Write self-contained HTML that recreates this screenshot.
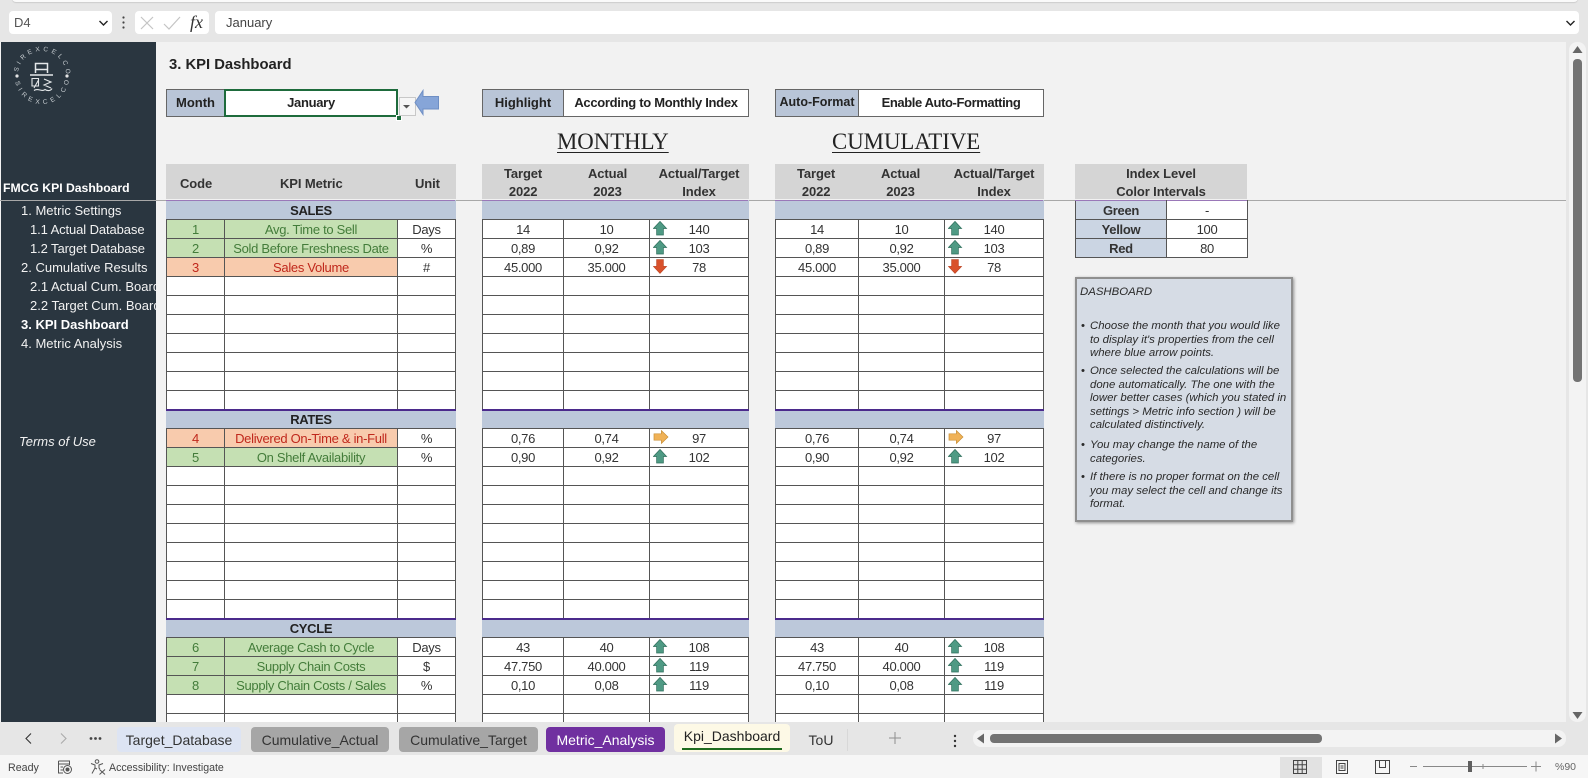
<!DOCTYPE html>
<html><head><meta charset="utf-8"><title>KPI Dashboard</title>
<style>
html,body{margin:0;padding:0;width:1588px;height:778px;overflow:hidden;background:#e6e6e6;font-family:"Liberation Sans",sans-serif;color:#333}
.a{position:absolute;white-space:nowrap}
.w{background:#fff;border-radius:4px;position:absolute;top:11px;height:23px}
#sheet{position:absolute;left:0;top:0;width:1588px;height:778px;clip-path:inset(42px 22px 56px 0)}
.bg{position:absolute;left:0;top:42px;width:1566px;height:680px;background:#f2f2f2}
#side{position:absolute;left:1px;top:42px;width:155px;height:680px;background:#2a3640;overflow:hidden;color:#f2f2f2;font-size:13px}
#side div{position:absolute;white-space:nowrap;line-height:16px}
.t{position:absolute;top:200px;border-collapse:collapse;table-layout:fixed;font-size:13px;color:#333;letter-spacing:-.3px}
.t td{height:19px;box-sizing:border-box;padding:1px 0 0;border:1px solid #555;text-align:center;background:#fff;white-space:nowrap;overflow:hidden;line-height:16px;position:relative}
.t td.s{background:#bcc8da;font-weight:bold;color:#222;border-color:#555 #bcc8da #555 #bcc8da;border-top:2px solid #4b2a8c}
.t tr:first-child td.s{border-top:1px solid #9a78b8}
.t td.g{background:#c5e0b3;color:#437c3a}
.t td.r{background:#f8cbad;color:#c0281c}
.t td svg{position:absolute;left:3px;top:1px}
.h{position:absolute;top:164px;height:35px;background:#d5d5d5;font-size:13px;font-weight:bold;color:#333;text-align:center;line-height:18px;letter-spacing:-.1px}
.h span{position:absolute;top:1px;white-space:nowrap}
.l{position:absolute;background:#b9c5d7;border:1px solid #666;box-sizing:border-box;font-size:13px;font-weight:bold;color:#222;text-align:center;line-height:25px;height:28px;top:89px}
.v{position:absolute;background:#fff;border:1px solid #666;box-sizing:border-box;font-size:13px;font-weight:bold;color:#222;text-align:center;line-height:25px;height:28px;top:89px;letter-spacing:-.3px}
.big{position:absolute;top:128px;font:22.8px/28px "Liberation Serif",serif;color:#222;text-decoration:underline;text-decoration-thickness:1px;text-underline-offset:3px;white-space:nowrap}
#note{position:absolute;left:1075px;top:277px;width:218px;height:245px;box-sizing:border-box;background:#d6dce5;border:2px solid #8f8f8f;box-shadow:1px 1px 3px rgba(0,0,0,.4);font-size:11.4px;font-style:italic;color:#2a2a2a;line-height:13.6px}
#note div{position:absolute;white-space:nowrap}
.tab{position:absolute;top:727px;height:25px;line-height:27px;text-align:center;font-size:14px;border-radius:4px;color:#333;white-space:nowrap}
</style></head><body>
<svg width="0" height="0" style="position:absolute"><defs>
<g id="up"><path d="M7 .4 13.6 7.5H10.4V14H3.6V7.5H.4Z" fill="#4f9a84" stroke="#2f6f5c" stroke-width=".7"/></g>
<g id="dn"><path d="M7 14.4 13.6 7.4H10.4V.6H3.6V7.4H.4Z" fill="#d9512b" stroke="#b83f1e" stroke-width=".6"/></g>
<g id="rt"><path d="M15 7 8.4 .6V3.8H1V10.2H8.4V13.4Z" fill="#f0b257" stroke="#c98f35" stroke-width=".7"/></g>
</defs></svg>

<!-- top bar -->
<div class="a" style="left:12px;top:-6px;width:1566px;height:8px;background:#fafafa;border-radius:4px;box-shadow:0 1px 1px #ccc"></div>
<div class="w" style="left:9px;width:103px"></div>
<div class="a" style="left:14px;top:15px;font-size:13px;color:#555;line-height:15px">D4</div>
<svg class="a" style="left:98px;top:19px" width="11" height="8"><path d="M1.5 2 5.5 6 9.5 2" fill="none" stroke="#222" stroke-width="1.4"/></svg>
<svg class="a" style="left:121px;top:15px" width="5" height="15"><circle cx="2.5" cy="2.5" r="1.1" fill="#444"/><circle cx="2.5" cy="7.5" r="1.1" fill="#444"/><circle cx="2.5" cy="12.5" r="1.1" fill="#444"/></svg>
<div class="w" style="left:135px;width:74px"></div>
<svg class="a" style="left:140px;top:16px" width="42" height="14"><path d="M1 1 13 13M13 1 1 13" stroke="#c4c4c4" stroke-width="1.2" fill="none"/><path d="M24 8 29 13 40 1" stroke="#c4c4c4" stroke-width="1.2" fill="none"/></svg>
<div class="a" style="left:190px;top:12px;font:italic 18px/20px 'Liberation Serif',serif;color:#333">fx</div>
<div class="w" style="left:215px;width:1364px"></div>
<div class="a" style="left:226px;top:15px;font-size:13px;color:#444;line-height:15px">January</div>
<svg class="a" style="left:1565px;top:19px" width="11" height="8"><path d="M1.5 2 5.5 6 9.5 2" fill="none" stroke="#222" stroke-width="1.4"/></svg>

<div id="sheet">
<div class="bg"></div>
<div id="side">
<svg class="a" style="left:0;top:0" width="85" height="70" font-family="Liberation Sans,sans-serif">
<defs><path id="c1" d="M17 33a24 24 0 0 1 48 0"/><path id="c2" d="M14 35a27 27 0 0 0 54 0"/></defs>
<text font-size="6.5" fill="#c8ced2" letter-spacing="3.2"><textPath href="#c1" startOffset="3">SIREXCELCO</textPath></text>
<text font-size="6.5" fill="#c8ced2" letter-spacing="3.8"><textPath href="#c2" startOffset="5">SIREXCELCO</textPath></text>
<circle cx="16" cy="34" r="1.6" fill="#e4e4e4"/><circle cx="66" cy="34" r="1.6" fill="#e4e4e4"/>
<path d="M34.5 31V21.5H46.5V31M34.5 27.5H46.5M29 33H52" fill="none" stroke="#e4e7e9" stroke-width="1.5"/>
<path d="M31 36.5H37.5V44H31ZM33 46 37.5 38M43 37 50 40 43 43 50 46M33 48.5C37 45.5 41 50.5 44 47.5 47 49.5 50 48.5 51 46.5" fill="none" stroke="#e4e7e9" stroke-width="1.1"/>
</svg>
<div style="left:2px;top:138px;font-weight:bold;font-size:12.2px;color:#fff">FMCG KPI Dashboard</div>
<div style="left:20px;top:161px">1. Metric Settings</div>
<div style="left:29px;top:180px;letter-spacing:-.1px">1.1 Actual Database</div>
<div style="left:29px;top:199px;letter-spacing:-.1px">1.2 Target Database</div>
<div style="left:20px;top:218px">2. Cumulative Results</div>
<div style="left:29px;top:237px">2.1 Actual Cum. Board</div>
<div style="left:29px;top:256px">2.2 Target Cum. Board</div>
<div style="left:20px;top:275px;font-weight:bold;color:#fff">3. KPI Dashboard</div>
<div style="left:20px;top:294px">4. Metric Analysis</div>
<div style="left:18px;top:392px;font-style:italic">Terms of Use</div>
</div>
<div class="a" style="left:0;top:200px;width:1566px;height:1px;background:#a8a8a8"></div>

<div class="a" style="left:169px;top:56px;font-size:14.8px;font-weight:bold;color:#222;line-height:19px">3. KPI Dashboard</div>

<div class="l" style="left:166px;width:59px">Month</div>
<div class="v" style="left:224px;width:174px;border:2px solid #1e6b3c;line-height:24px">January</div>
<div class="a" style="left:396px;top:115px;width:4px;height:4px;background:#1e6b3c;border:1px solid #fff"></div>
<div class="a" style="left:399px;top:97px;width:15px;height:17px;background:#f6f6f6;border:1px solid #c8c8c8"></div>
<svg class="a" style="left:403px;top:105px" width="8" height="4"><path d="M0 0H7L3.5 3.5Z" fill="#555"/></svg>
<svg class="a" style="left:414px;top:89px" width="26" height="27"><path d="M1 13.5 9 1.5V7.5H24.5V20H9V25.5Z" fill="#86a5d8" stroke="#6f8fc4"/></svg>

<div class="l" style="left:482px;width:82px">Highlight</div>
<div class="v" style="left:563px;width:186px">According to Monthly Index</div>
<div class="l" style="left:775px;width:84px;font-size:12.5px">Auto-Format</div>
<div class="v" style="left:858px;width:186px;letter-spacing:-.4px">Enable Auto-Formatting</div>

<div class="big" style="left:557px">MONTHLY</div>
<div class="big" style="left:832px">CUMULATIVE</div>

<div class="h" style="left:166px;width:290px"><span style="left:14px;top:11px">Code</span><span style="left:114px;top:11px">KPI Metric</span><span style="left:249px;top:11px">Unit</span></div>
<div class="h" style="left:482px;width:267px"><span style="left:22px">Target<br>2022</span><span style="left:106px">Actual<br>2023</span><span style="left:175px;width:84px">Actual/Target<br>Index</span></div>
<div class="h" style="left:775px;width:269px"><span style="left:22px">Target<br>2022</span><span style="left:106px">Actual<br>2023</span><span style="left:177px;width:84px">Actual/Target<br>Index</span></div>
<div class="h" style="left:1075px;width:172px"><span style="left:0;width:172px">Index Level<br>Color Intervals</span></div>

<table class="t" style="left:166px"><col style="width:58px"><col style="width:173px"><col style="width:58px">
<tr><td class="s" colspan="3">SALES</td></tr>
<tr><td class="g">1</td><td class="g">Avg. Time to Sell</td><td>Days</td></tr>
<tr><td class="g">2</td><td class="g">Sold Before Freshness Date</td><td>%</td></tr>
<tr><td class="r">3</td><td class="r">Sales Volume</td><td>#</td></tr>
<tr><td></td><td></td><td></td></tr><tr><td></td><td></td><td></td></tr><tr><td></td><td></td><td></td></tr><tr><td></td><td></td><td></td></tr><tr><td></td><td></td><td></td></tr><tr><td></td><td></td><td></td></tr><tr><td></td><td></td><td></td></tr>
<tr><td class="s" colspan="3">RATES</td></tr>
<tr><td class="r">4</td><td class="r">Delivered On-Time &amp; in-Full</td><td>%</td></tr>
<tr><td class="g">5</td><td class="g">On Shelf Availability</td><td>%</td></tr>
<tr><td></td><td></td><td></td></tr><tr><td></td><td></td><td></td></tr><tr><td></td><td></td><td></td></tr><tr><td></td><td></td><td></td></tr><tr><td></td><td></td><td></td></tr><tr><td></td><td></td><td></td></tr><tr><td></td><td></td><td></td></tr><tr><td></td><td></td><td></td></tr>
<tr><td class="s" colspan="3">CYCLE</td></tr>
<tr><td class="g">6</td><td class="g">Average Cash to Cycle</td><td>Days</td></tr>
<tr><td class="g">7</td><td class="g">Supply Chain Costs</td><td>$</td></tr>
<tr><td class="g">8</td><td class="g">Supply Chain Costs / Sales</td><td>%</td></tr>
<tr><td></td><td></td><td></td></tr><tr><td></td><td></td><td></td></tr>
</table>

<table class="t" style="left:482px"><col style="width:81px"><col style="width:86px"><col style="width:99px">
<tr><td class="s" colspan="3"></td></tr>
<tr><td>14</td><td>10</td><td><svg width="15" height="15"><use href="#up"/></svg>140</td></tr>
<tr><td>0,89</td><td>0,92</td><td><svg width="15" height="15"><use href="#up"/></svg>103</td></tr>
<tr><td>45.000</td><td>35.000</td><td><svg width="15" height="15"><use href="#dn"/></svg>78</td></tr>
<tr><td></td><td></td><td></td></tr><tr><td></td><td></td><td></td></tr><tr><td></td><td></td><td></td></tr><tr><td></td><td></td><td></td></tr><tr><td></td><td></td><td></td></tr><tr><td></td><td></td><td></td></tr><tr><td></td><td></td><td></td></tr>
<tr><td class="s" colspan="3"></td></tr>
<tr><td>0,76</td><td>0,74</td><td><svg width="16" height="15"><use href="#rt"/></svg>97</td></tr>
<tr><td>0,90</td><td>0,92</td><td><svg width="15" height="15"><use href="#up"/></svg>102</td></tr>
<tr><td></td><td></td><td></td></tr><tr><td></td><td></td><td></td></tr><tr><td></td><td></td><td></td></tr><tr><td></td><td></td><td></td></tr><tr><td></td><td></td><td></td></tr><tr><td></td><td></td><td></td></tr><tr><td></td><td></td><td></td></tr><tr><td></td><td></td><td></td></tr>
<tr><td class="s" colspan="3"></td></tr>
<tr><td>43</td><td>40</td><td><svg width="15" height="15"><use href="#up"/></svg>108</td></tr>
<tr><td>47.750</td><td>40.000</td><td><svg width="15" height="15"><use href="#up"/></svg>119</td></tr>
<tr><td>0,10</td><td>0,08</td><td><svg width="15" height="15"><use href="#up"/></svg>119</td></tr>
<tr><td></td><td></td><td></td></tr><tr><td></td><td></td><td></td></tr>
</table>

<table class="t" style="left:775px"><col style="width:83px"><col style="width:86px"><col style="width:99px">
<tr><td class="s" colspan="3"></td></tr>
<tr><td>14</td><td>10</td><td><svg width="15" height="15"><use href="#up"/></svg>140</td></tr>
<tr><td>0,89</td><td>0,92</td><td><svg width="15" height="15"><use href="#up"/></svg>103</td></tr>
<tr><td>45.000</td><td>35.000</td><td><svg width="15" height="15"><use href="#dn"/></svg>78</td></tr>
<tr><td></td><td></td><td></td></tr><tr><td></td><td></td><td></td></tr><tr><td></td><td></td><td></td></tr><tr><td></td><td></td><td></td></tr><tr><td></td><td></td><td></td></tr><tr><td></td><td></td><td></td></tr><tr><td></td><td></td><td></td></tr>
<tr><td class="s" colspan="3"></td></tr>
<tr><td>0,76</td><td>0,74</td><td><svg width="16" height="15"><use href="#rt"/></svg>97</td></tr>
<tr><td>0,90</td><td>0,92</td><td><svg width="15" height="15"><use href="#up"/></svg>102</td></tr>
<tr><td></td><td></td><td></td></tr><tr><td></td><td></td><td></td></tr><tr><td></td><td></td><td></td></tr><tr><td></td><td></td><td></td></tr><tr><td></td><td></td><td></td></tr><tr><td></td><td></td><td></td></tr><tr><td></td><td></td><td></td></tr><tr><td></td><td></td><td></td></tr>
<tr><td class="s" colspan="3"></td></tr>
<tr><td>43</td><td>40</td><td><svg width="15" height="15"><use href="#up"/></svg>108</td></tr>
<tr><td>47.750</td><td>40.000</td><td><svg width="15" height="15"><use href="#up"/></svg>119</td></tr>
<tr><td>0,10</td><td>0,08</td><td><svg width="15" height="15"><use href="#up"/></svg>119</td></tr>
<tr><td></td><td></td><td></td></tr><tr><td></td><td></td><td></td></tr>
</table>

<table class="t" style="left:1075px"><col style="width:91px"><col style="width:81px">
<tr><td style="background:#cbd5e3;font-weight:bold;border-top-color:#9a78b8">Green</td><td style="border-top-color:#9a78b8">-</td></tr>
<tr><td style="background:#cbd5e3;font-weight:bold">Yellow</td><td>100</td></tr>
<tr><td style="background:#cbd5e3;font-weight:bold">Red</td><td>80</td></tr>
</table>

<div id="note">
<div style="left:3px;top:7px">DASHBOARD</div>
<div style="left:4px;top:41px;font-style:normal">•</div>
<div style="left:13px;top:41px">Choose the month that you would like<br>to display it's properties from the cell<br>where blue arrow points.</div>
<div style="left:4px;top:86px;font-style:normal">•</div>
<div style="left:13px;top:86px">Once selected the calculations will be<br>done automatically. The one with the<br>lower better cases (which you stated in<br>settings &gt; Metric info section ) will be<br>calculated distinctively.</div>
<div style="left:4px;top:160px;font-style:normal">•</div>
<div style="left:13px;top:160px">You may change the name of the<br>categories.</div>
<div style="left:4px;top:192px;font-style:normal">•</div>
<div style="left:13px;top:192px">If there is no proper format on the cell<br>you may select the cell and change its<br>format.</div>
</div>
</div>

<!-- vertical scrollbar -->
<div class="a" style="left:1569px;top:42px;width:17px;height:680px;background:#f3f3f3;border-radius:8px"></div>
<div class="a" style="left:1573px;top:59px;width:9px;height:323px;background:#737373;border-radius:4px"></div>
<svg class="a" style="left:1572px;top:46px" width="11" height="8"><path d="M5.5 0 10.5 7H.5Z" fill="#666"/></svg>
<svg class="a" style="left:1572px;top:712px" width="11" height="8"><path d="M5.5 7 10.5 0H.5Z" fill="#666"/></svg>

<!-- sheet tabs -->
<div class="a" style="left:0;top:722px;width:1588px;height:33px;background:#e6e6e6"></div>
<svg class="a" style="left:24px;top:732px" width="10" height="13"><path d="M7 1.5 2 6.5 7 11.5" fill="none" stroke="#333" stroke-width="1.1"/></svg>
<svg class="a" style="left:58px;top:732px" width="10" height="13"><path d="M3 1.5 8 6.5 3 11.5" fill="none" stroke="#aaa" stroke-width="1.1"/></svg>
<svg class="a" style="left:89px;top:736px" width="13" height="5"><circle cx="2" cy="2.5" r="1.4" fill="#444"/><circle cx="6.5" cy="2.5" r="1.4" fill="#444"/><circle cx="11" cy="2.5" r="1.4" fill="#444"/></svg>
<div class="tab" style="left:117px;width:124px;background:#dde4f3">Target_Database</div>
<div class="tab" style="left:251px;width:138px;background:#a6a6a6">Cumulative_Actual</div>
<div class="tab" style="left:399px;width:139px;background:#a6a6a6">Cumulative_Target</div>
<div class="tab" style="left:546px;width:119px;background:#7030a0;color:#fff">Metric_Analysis</div>
<div class="tab" style="left:674px;top:724px;width:116px;height:28px;line-height:25px;background:#fdf9e6;color:#222">Kpi_Dashboard<div style="position:absolute;left:8px;right:8px;top:24px;height:2px;background:#1e6b1e"></div></div>
<div class="tab" style="left:801px;width:40px;background:none">ToU</div>
<div class="a" style="left:847px;top:729px;width:1px;height:22px;background:#d8d8d8"></div>
<svg class="a" style="left:889px;top:732px" width="12" height="12"><path d="M6 0V12M0 6H12" stroke="#8f8f8f" stroke-width="1"/></svg>
<svg class="a" style="left:953px;top:734px" width="4" height="14"><circle cx="2" cy="2" r="1.2" fill="#333"/><circle cx="2" cy="7" r="1.2" fill="#333"/><circle cx="2" cy="12" r="1.2" fill="#333"/></svg>
<div class="a" style="left:973px;top:730px;width:593px;height:17px;background:#f3f3f3;border-radius:8px"></div>
<div class="a" style="left:990px;top:734px;width:332px;height:9px;background:#737373;border-radius:4px"></div>
<svg class="a" style="left:977px;top:733px" width="8" height="11"><path d="M0 5.5 7 .5V10.5Z" fill="#666"/></svg>
<svg class="a" style="left:1554px;top:733px" width="8" height="11"><path d="M8 5.5 1 .5V10.5Z" fill="#666"/></svg>

<!-- status bar -->
<div class="a" style="left:0;top:755px;width:1588px;height:23px;background:#f6f6f6"></div>
<div class="a" style="left:8px;top:761px;font-size:10.7px;line-height:14px;color:#444">Ready</div>
<svg class="a" style="left:57px;top:760px" width="16" height="15"><path d="M1.5 1H12.5V5M1.5 1V13H6M1.5 4H12.5M3.5 7H6M3.5 10H6" fill="none" stroke="#555"/><circle cx="10.5" cy="9.5" r="4" fill="none" stroke="#555"/><circle cx="10.5" cy="9.5" r="2" fill="#555"/></svg>
<svg class="a" style="left:90px;top:759px" width="16" height="16"><circle cx="7" cy="2.5" r="1.8" fill="none" stroke="#555"/><path d="M1 4.5 5 6V9L2 14.5M13 4.5 9 6V9L10 10M5 9 7 10" fill="none" stroke="#555"/><path d="M9.5 10.5 15 15.5M15 10.5 9.5 15.5" stroke="#555"/></svg>
<div class="a" style="left:109px;top:761px;font-size:10.6px;line-height:14px;color:#444">Accessibility: Investigate</div>
<div class="a" style="left:1280px;top:757px;width:42px;height:21px;background:#e2e2e2"></div>
<svg class="a" style="left:1293px;top:759px" width="100" height="16" fill="none" stroke="#444"><path d="M.5 1.5H13.5V14.5H.5ZM.5 5.8H13.5M.5 10.2H13.5M4.8 1.5V14.5M9.2 1.5V14.5"/><path d="M43.5 1.5H54.5V14.5H43.5ZM46 4.5H52V11.5H46ZM47.5 7H50.5M47.5 9H50.5"/><path d="M82.5 1.5H96.5V14.5H82.5ZM86.5 1.5V8.5H92.5V1.5"/></svg>
<svg class="a" style="left:1405px;top:758px" width="140" height="17"><path d="M5 8.5H12M18 8.5H122" stroke="#888"/><path d="M72 8.5H82M78 6V11" stroke="#888" fill="none"/><rect x="63" y="3" width="4" height="11" fill="#5f5f5f"/><path d="M126 8.5H136M131 3.5V13.5" stroke="#888"/></svg>
<div class="a" style="left:1555px;top:760px;font-size:10.5px;line-height:14px;color:#666">%90</div>
</body></html>
